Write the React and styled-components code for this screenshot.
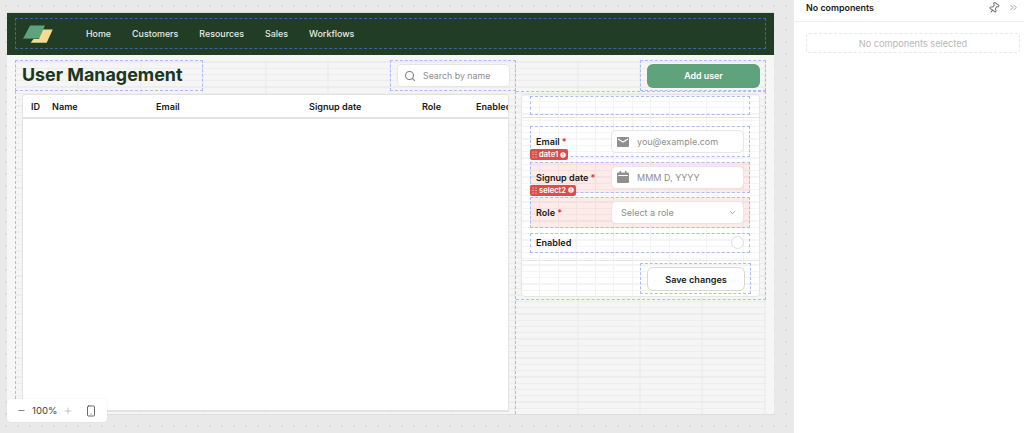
import React from "react";
import styled, { createGlobalStyle } from "styled-components";
import { ChevronDown, ChevronsRight, Minus, Pin, Plus, Search, Smartphone } from "lucide-react";

const Global = createGlobalStyle`
  html, body { margin: 0; padding: 0; overflow: hidden; }
  body { font-family: Inter, "Liberation Sans", sans-serif; }
  * { box-sizing: border-box; }
`;
const Page = styled.div`display: flex; width: 1024px; height: 433px; overflow: hidden;`;
const Canvas = styled.main`
  width: 794px; height: 433px; padding: 12px 20px 18px 7px; flex: none;
  background-color: #e9e9e9;
  background-image: radial-gradient(circle, #dadada 0.6px, transparent 1px);
  background-size: 12px 12px;
`;
const Frame = styled.div`
  position: relative; width: 767px; height: 403px; display: flex; flex-direction: column;
  background: #f6f6f6; border-top: 1px solid #d8d8d8; border-bottom: 1px solid #dedede;
`;
const Nav = styled.nav`height: 42px; flex: none; padding: 5px 8px 6px; background: #213d25;`;
const NavInner = styled.div`
  height: 31px; display: flex; align-items: center; gap: 21px; padding-left: 7px;
  border: 1px dashed #3f62a8;
`;
const Logo = styled.svg`width: 31px; height: 19px; margin-right: 11px; flex: none;`;
const NavLink = styled.a`color: #e6ebe6; font-size: 8.9px; font-weight: 500;`;
const Workspace = styled.div`
  flex: 1; min-height: 0; margin: 0 8px; padding-top: 5px; display: grid;
  grid-template-columns: 501px 250px; grid-template-rows: 31px 1fr;
  background-color: #f5f5f5;
  background-image:
    repeating-linear-gradient(90deg, transparent 0 61.4px, #e9e9e9 61.4px 62.4px),
    repeating-linear-gradient(0deg, transparent 0 5px, #ededed 5px 6.3px);
  background-position: 1.5px 0, 0 0;
  background-clip: content-box;
`;
const HeaderLeft = styled.div`display: flex; justify-content: space-between;`;
const HeaderRight = styled.div`display: flex; justify-content: flex-end;`;
const TitleSlot = styled.div`width: 188px; padding: 0 0 3px 6px; display: flex; align-items: center; border: 1px dashed #a9bdf2;`;
const Title = styled.h1`margin: 0; font-size: 17.9px; font-weight: 700; color: #1b3720; white-space: nowrap;`;
const SearchSlot = styled.div`width: 126px; padding: 3px 5px 3px 6px; border: 1px dashed #a9bdf2;`;
const SearchBox = styled.div`
  height: 23px; display: flex; align-items: center; gap: 7px; padding-left: 6px;
  background: #fff; border: 1px solid #e6e6e6; border-radius: 4px;
  color: #8e8e8e; font-size: 8.8px;
`;
const ButtonSlot = styled.div`width: 126px; padding: 3px 5px 2px 6px; border: 1px dashed #a9bdf2;`;
const PrimaryButton = styled.button`
  display: block; width: 100%; height: 23.5px; padding: 0; border: 0; border-radius: 6px;
  background: #5fa37d; color: #fff; font: 600 8.9px Inter, sans-serif;
`;
const TableZone = styled.section`
  min-height: 0; padding: 3px 6px 2px 6px; border-left: 1px dashed #a9bdf2; border-right: 1px dashed #a9bdf2;
`;
const TableCard = styled.div`
  height: 100%; overflow: hidden; background: #fff; border: 1px solid #e3e3e3; border-bottom-width: 2px; border-radius: 4px 4px 0 0;
`;
const TableHead = styled.div`
  height: 24px; display: grid; grid-template-columns: 21px 104px 153px 113px 54px 60px; align-items: center;
  padding-left: 8px; border-bottom: 2px solid #e2e2e2; font-size: 9.1px; font-weight: 600; color: #1a1a1a; white-space: nowrap;
`;
const DetailZone = styled.section`
  align-self: start; height: 209px; padding: 2px 5px 2px 5px; border: 1px dashed #a9bdf2; border-left: 0;
`;
const DetailCard = styled.div`
  height: 100%; display: flex; flex-direction: column; background-color: #fff;
  background-image:
    repeating-linear-gradient(90deg, transparent 0 17.5px, #f3f3f3 17.5px 18.5px),
    repeating-linear-gradient(0deg, transparent 0 5px, #f4f4f4 5px 6.3px);
  border: 1px solid #e5e5e5; border-radius: 4px;
`;
const DetailHead = styled.div`height: 23px; flex: none; padding: 1px 9px 2px 8px; border-bottom: 1px solid #e5e5e5;`;
const DashedFill = styled.div`height: 100%; border: 1px dashed #a9bdf2;`;
const Form = styled.form`flex: none; display: flex; flex-direction: column; gap: 4.5px; padding: 8px 9px 7px 8px; border-bottom: 1px solid #e5e5e5;`;
const Row = styled.div`
  position: relative; height: ${p => (p.$short ? 20 : 31)}px; flex: none; display: grid; grid-template-columns: 75px 1fr; align-items: center;
  padding: 0 5px; border: 1px dashed #a9bdf2; background: ${p => (p.$error ? "rgba(238, 90, 80, 0.12)" : "transparent")};
`;
const Label = styled.label`font-size: 9.1px; font-weight: 600; color: #1a1a1a; white-space: nowrap;`;
const Required = styled.span`color: #e03a3a; margin-left: 2px;`;
const Field = styled.div`
  height: 23px; display: flex; align-items: center; gap: 8px; padding-left: 5px;
  background: #fff; border: 1px solid #e6e6e6; border-radius: 5px; color: #8e8e8e; font-size: 9px;
`;
const SelectField = styled(Field)`justify-content: space-between; padding: 0 6px 0 9px;`;
const Radio = styled.span`
  justify-self: end; width: 13px; height: 13px; border-radius: 50%; background: #fff; border: 1px solid #dcdcdc;
`;
const EnabledRow = styled(Row)`grid-template-columns: 1fr auto;`;
const Badge = styled.span`
  position: absolute; left: -1px; bottom: -4px; z-index: 2; height: 11px; display: flex; align-items: center; gap: 2px; padding: 0 2px 0 2px;
  background: #e04b4b; color: #fff; border-radius: 2px; font-size: 7.6px; font-weight: 600;
`;
const Footer = styled.div`flex: 1; display: flex; justify-content: flex-end; padding: 2.5px 8px 2px 0;`;
const SaveSlot = styled.div`width: 111px; height: 31px; padding: 3px 5px 2px 6px; border: 1px dashed #a9bdf2;`;
const SecondaryButton = styled.button`
  display: block; width: 100%; height: 24px; padding: 0; background: #fff; border: 1px solid #d8d8d8; border-radius: 6px;
  color: #1a1a1a; font: 600 9.1px Inter, sans-serif;
`;
const Zoom = styled.div`
  position: absolute; left: 0; bottom: -8px; width: 100px; height: 23px; display: flex; align-items: center; gap: 6px; padding-left: 10px;
  background: #fff; border-radius: 4px; box-shadow: 0 0 2px rgba(0,0,0,.08); font-size: 9.6px; color: #444;
`;
const ZoomValue = styled.span`width: 25px; text-align: center;`;
const Side = styled.aside`width: 230px; height: 433px; flex: none; background: #fff;`;
const SideHead = styled.div`
  height: 22px; display: flex; align-items: center; gap: 8px; padding: 0 5px 6px 12px; border-bottom: 1px solid #eee;
`;
const SideTitle = styled.div`flex: 1; font-size: 8.9px; font-weight: 600; color: #1a1a1a;`;
const Empty = styled.div`
  margin: 11px 4px 0 12px; height: 20px; display: flex; align-items: center; justify-content: center;
  border: 1px dashed #e8e8e8; border-radius: 3px; color: #b8b8b8; font-size: 9.2px;
`;

const Grip = () => (
  <svg width="5" height="7" viewBox="0 0 5 7" fill="#fff">
    {[1, 4].map(x => [1, 3.5, 6].map(y => <circle key={`${x}${y}`} cx={x} cy={y} r="0.6" />))}
  </svg>
);
const Info = () => (
  <svg width="6" height="6" viewBox="0 0 7 7">
    <circle cx="3.5" cy="3.5" r="3.2" fill="#fff" />
    <rect x="3" y="1.5" width="1" height="2.4" fill="#e04b4b" />
    <rect x="3" y="4.5" width="1" height="1" fill="#e04b4b" />
  </svg>
);
const Mail = () => (
  <svg width="12" height="10" viewBox="0 0 12 10">
    <rect width="12" height="10" rx="1" fill="#8f8f8f" />
    <path d="M1 2l5 3 5-3" fill="none" stroke="#fff" strokeWidth="1.1" />
  </svg>
);
const Calendar = () => (
  <svg width="12" height="12" viewBox="0 0 12 12">
    <rect y="1.5" width="12" height="10.5" rx="1.2" fill="#8f8f8f" />
    <rect x="2.5" width="1.5" height="3" fill="#8f8f8f" />
    <rect x="8" width="1.5" height="3" fill="#8f8f8f" />
    <rect x="1.2" y="4" width="9.6" height="1" fill="#fff" />
  </svg>
);

export default function App() {
  return (
    <Page>
      <Global />
      <Canvas>
        <Frame>
          <Nav>
            <NavInner>
              <Logo viewBox="0 0 31 19">
                <polygon points="17.7,5.5 29.7,5.5 23.7,18.8 7.7,18.8" fill="#f3dc8f" />
                <polygon points="7,1.5 22,1.5 16,15 0,15" fill="#5fa37d" />
                <polygon points="0.5,14 16.4,14 16,15 0,15" fill="#3f7a5a" />
              </Logo>
              {["Home", "Customers", "Resources", "Sales", "Workflows"].map(l => <NavLink key={l}>{l}</NavLink>)}
            </NavInner>
          </Nav>
          <Workspace>
            <HeaderLeft>
              <TitleSlot><Title>User Management</Title></TitleSlot>
              <SearchSlot>
                <SearchBox><Search size={12} color="#7f7f7f" strokeWidth={2.2} />Search by name</SearchBox>
              </SearchSlot>
            </HeaderLeft>
            <HeaderRight>
              <ButtonSlot><PrimaryButton>Add user</PrimaryButton></ButtonSlot>
            </HeaderRight>
            <TableZone>
              <TableCard>
                <TableHead>
                  <span>ID</span><span>Name</span><span>Email</span><span>Signup date</span><span>Role</span><span>Enabled</span>
                </TableHead>
              </TableCard>
            </TableZone>
            <DetailZone>
              <DetailCard>
                <DetailHead><DashedFill /></DetailHead>
                <Form>
                  <Row>
                    <Label>Email<Required>*</Required></Label>
                    <Field><Mail />you@example.com</Field>
                    <Badge><Grip />date1<Info /></Badge>
                  </Row>
                  <Row $error>
                    <Label>Signup date<Required>*</Required></Label>
                    <Field><Calendar />MMM D, YYYY</Field>
                    <Badge><Grip />select2<Info /></Badge>
                  </Row>
                  <Row $error>
                    <Label>Role<Required>*</Required></Label>
                    <SelectField>Select a role<ChevronDown size={9} color="#8a8a8a" /></SelectField>
                  </Row>
                  <EnabledRow $short>
                    <Label>Enabled</Label>
                    <Radio />
                  </EnabledRow>
                </Form>
                <Footer>
                  <SaveSlot><SecondaryButton>Save changes</SecondaryButton></SaveSlot>
                </Footer>
              </DetailCard>
            </DetailZone>
          </Workspace>
          <Zoom>
            <Minus size={9} color="#555" />
            <ZoomValue>100%</ZoomValue>
            <Plus size={10} color="#bbb" />
            <Smartphone size={12} color="#666" style={{ marginLeft: 6 }} />
          </Zoom>
        </Frame>
      </Canvas>
      <Side>
        <SideHead>
          <SideTitle>No components</SideTitle>
          <Pin size={12} color="#777" style={{ transform: "rotate(35deg)" }} />
          <ChevronsRight size={11} color="#777" strokeWidth={1.5} />
        </SideHead>
        <Empty>No components selected</Empty>
      </Side>
    </Page>
  );
}
